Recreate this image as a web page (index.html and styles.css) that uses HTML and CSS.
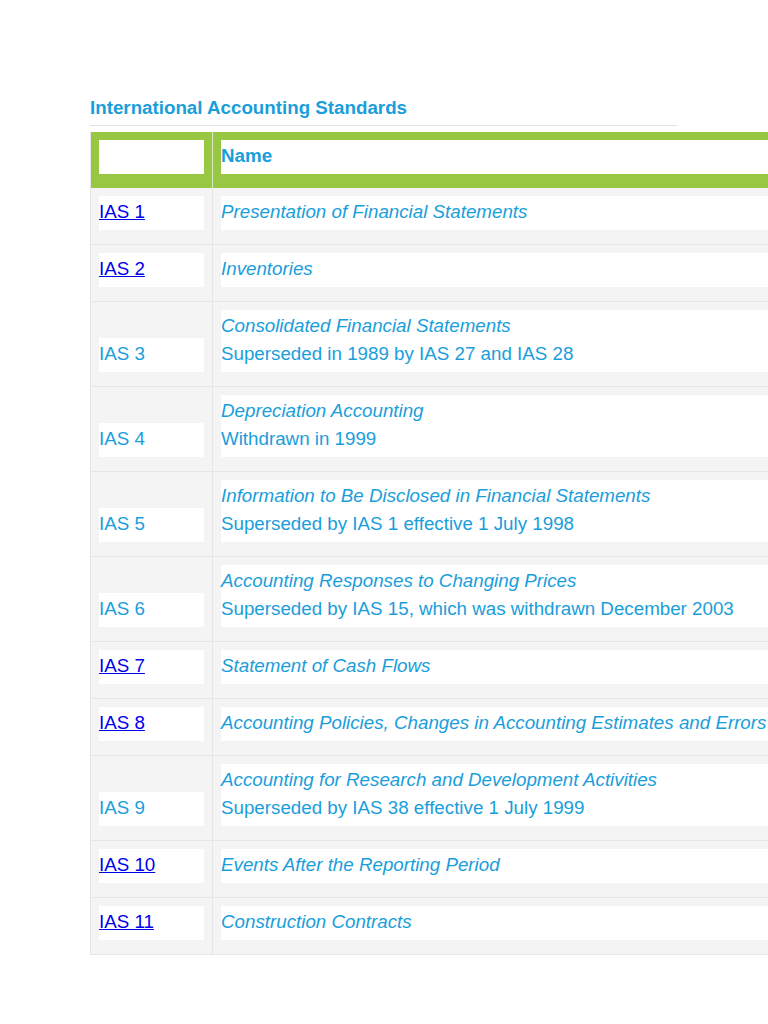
FILE: index.html
```html
<!DOCTYPE html>
<html>
<head>
<meta charset="utf-8">
<link rel="stylesheet" href="styles.css">
</head>
<body>
<div class="page">
  <h1 class="title">International Accounting Standards</h1>
  <div class="rule"></div>
  <table class="ias">
    <tr class="head">
      <td class="num"><div class="box">&nbsp;</div></td>
      <td class="name"><div class="box"><strong>Name</strong></div></td>
    </tr>
    <tr>
      <td class="num"><div class="box"><a href="#">IAS 1</a></div></td>
      <td class="name"><div class="box"><em>Presentation of Financial Statements</em></div></td>
    </tr>
    <tr>
      <td class="num"><div class="box"><a href="#">IAS 2</a></div></td>
      <td class="name"><div class="box"><em>Inventories</em></div></td>
    </tr>
    <tr>
      <td class="num"><div class="box">IAS 3</div></td>
      <td class="name"><div class="box"><em>Consolidated Financial Statements</em><br>Superseded in 1989 by IAS 27 and IAS 28</div></td>
    </tr>
    <tr>
      <td class="num"><div class="box">IAS 4</div></td>
      <td class="name"><div class="box"><em>Depreciation Accounting</em><br>Withdrawn in 1999</div></td>
    </tr>
    <tr>
      <td class="num"><div class="box">IAS 5</div></td>
      <td class="name"><div class="box"><em>Information to Be Disclosed in Financial Statements</em><br>Superseded by IAS 1 effective 1 July 1998</div></td>
    </tr>
    <tr>
      <td class="num"><div class="box">IAS 6</div></td>
      <td class="name"><div class="box"><em>Accounting Responses to Changing Prices</em><br>Superseded by IAS 15, which was withdrawn December 2003</div></td>
    </tr>
    <tr>
      <td class="num"><div class="box"><a href="#">IAS 7</a></div></td>
      <td class="name"><div class="box"><em>Statement of Cash Flows</em></div></td>
    </tr>
    <tr>
      <td class="num"><div class="box"><a href="#">IAS 8</a></div></td>
      <td class="name"><div class="box"><em>Accounting Policies, Changes in Accounting Estimates and Errors</em></div></td>
    </tr>
    <tr>
      <td class="num"><div class="box">IAS 9</div></td>
      <td class="name"><div class="box"><em>Accounting for Research and Development Activities</em><br>Superseded by IAS 38 effective 1 July 1999</div></td>
    </tr>
    <tr>
      <td class="num"><div class="box"><a href="#">IAS 10</a></div></td>
      <td class="name"><div class="box"><em>Events After the Reporting Period</em></div></td>
    </tr>
    <tr>
      <td class="num"><div class="box"><a href="#">IAS 11</a></div></td>
      <td class="name"><div class="box"><em>Construction Contracts</em></div></td>
    </tr>
  </table>
</div>
</body>
</html>
```
FILE: styles.css
```css
html, body {
  margin: 0;
  padding: 0;
  background: #ffffff;
  overflow: hidden;
}
body {
  font-family: "Liberation Sans", Arial, sans-serif;
  font-size: 18.75px;
  color: #1a9edb;
}
.page {
  box-sizing: border-box;
  width: 768px;
  overflow: hidden;
  padding: 97px 0 0 90px;
}
.title {
  margin: 0;
  font-size: 18.75px;
  line-height: 22px;
  font-weight: bold;
  color: #1a9edb;
}
.rule {
  width: 587px;
  height: 1px;
  background: #e2e2e2;
  margin: 6px 0 6px 0;
}
.ias {
  border-collapse: separate;
  border-spacing: 0;
  table-layout: fixed;
  width: 900px;
  border-left: 1px solid #e6e6e6;
}
.ias td {
  background: #f4f4f4;
  border-right: 1px solid #e6e6e6;
  border-bottom: 1px solid #e6e6e6;
  padding: 8px 8px 14px 8px;
  vertical-align: bottom;
}
.ias td.num {
  width: 105px;
}
.ias .head td {
  background: #98c744;
  border-bottom: none;
  border-right-color: #d8ecbd;
  padding-bottom: 14px;
}
.box {
  background: #ffffff;
  line-height: 28px;
  padding: 2px 0 4px 0;
  white-space: nowrap;
}
.box strong {
  font-weight: bold;
}
.box a {
  color: #0000ee;
  text-decoration: underline;
}
.box em {
  font-style: italic;
}
```
